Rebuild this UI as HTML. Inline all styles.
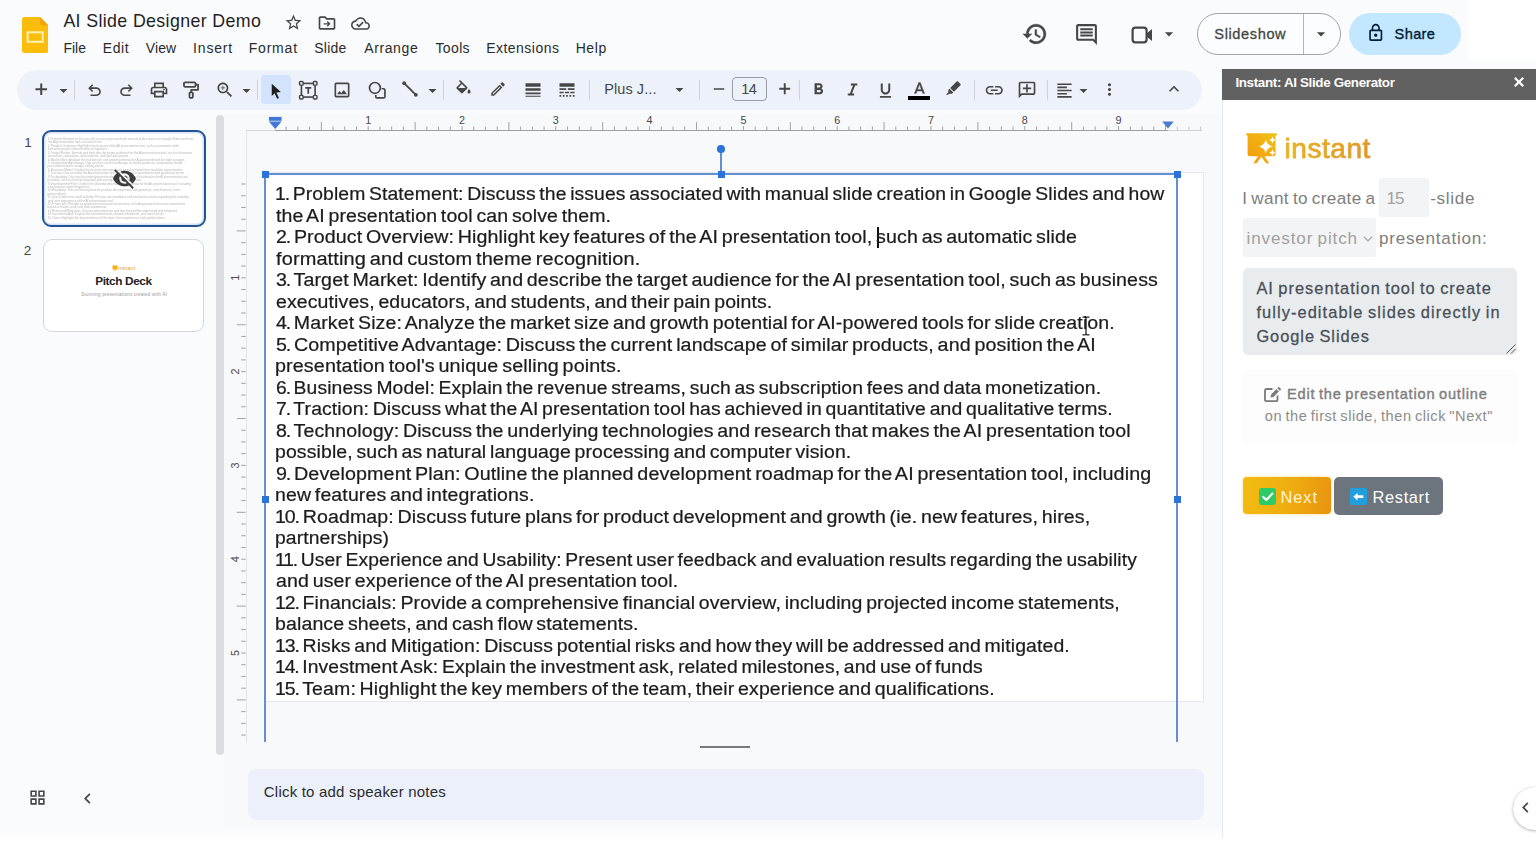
<!DOCTYPE html>
<html lang="en"><head><meta charset="utf-8"><title>AI Slide Designer Demo - Google Slides</title>
<style>
html,body{margin:0;padding:0}
body{width:1536px;height:864px;overflow:hidden;background:#f9fbfd;font-family:"Liberation Sans",sans-serif;position:relative}
.abs{position:absolute}
.t{position:absolute;white-space:pre;line-height:1;font-family:"Liberation Sans",sans-serif}
.sl{transform-origin:0 50%;-webkit-text-stroke:.22px #1c1c1c}
.th{color:#444;-webkit-text-stroke:0}
.ic{position:absolute;fill:#444746}
.sep{position:absolute;width:1px;height:20px;top:80px;background:#cfd2d7}
</style></head><body>
<!-- base areas -->
<div class="abs" style="left:1468px;top:0;width:68px;height:57px;background:#fff"></div>
<div class="abs" style="left:1468px;top:57px;width:68px;height:6px;background:linear-gradient(#fff,#f9fafb)"></div>

<!-- ===== logo ===== -->
<svg class="abs" style="left:21.5px;top:16.7px" width="26.5" height="36" viewBox="0 0 53 72">
 <path d="M5 0h31l17 17v50a5 5 0 0 1-5 5H5a5 5 0 0 1-5-5V5a5 5 0 0 1 5-5z" fill="#fabd0c"/>
 <path d="M36 0l17 17H41a5 5 0 0 1-5-5z" fill="#f0a508"/>
 <rect x="11.200" y="30.600" width="30.200" height="19" fill="none" stroke="#fdf2b0" stroke-width="4"/>
</svg>
<!-- title icons -->
<svg class="ic" style="left:283.5px;top:13.4px" width="19" height="19" viewBox="0 0 24 24"><path d="M22 9.24l-7.19-.62L12 2 9.19 8.63 2 9.24l5.46 4.73L5.82 21 12 17.27 18.18 21l-1.63-7.03L22 9.24zM12 15.4l-3.76 2.27 1-4.28-3.32-2.88 4.38-.38L12 6.1l1.71 4.04 4.38.38-3.32 2.88 1 4.28L12 15.4z"/></svg>
<svg class="ic" style="left:316.7px;top:13.4px" width="20" height="20" viewBox="0 0 24 24"><path d="M20 6h-8l-2-2H4c-1.1 0-2 .9-2 2v12c0 1.1.9 2 2 2h16c1.1 0 2-.9 2-2V8c0-1.1-.9-2-2-2zm0 12H4V6h5.17l2 2H20v10z"/><path d="M8 12.2h5.2l-1.5-1.5 1.1-1.1 3.4 3.4-3.4 3.4-1.1-1.1 1.5-1.5H8z"/></svg>
<svg class="ic" style="left:351px;top:13.9px" width="19" height="19" viewBox="0 0 24 24"><path d="M19.35 10.04C18.67 6.59 15.64 4 12 4 9.11 4 6.6 5.64 5.35 8.04 2.34 8.36 0 10.91 0 14c0 3.31 2.69 6 6 6h13c2.76 0 5-2.24 5-5 0-2.64-2.05-4.78-4.65-4.96zM19 18H6c-2.21 0-4-1.79-4-4 0-2.05 1.53-3.76 3.56-3.97l1.07-.11.5-.95C8.08 7.14 9.94 6 12 6c2.62 0 4.88 1.86 5.39 4.43l.3 1.5 1.53.11c1.56.1 2.78 1.41 2.78 2.96 0 1.65-1.35 3-3 3zm-9-3.82l-2.09-2.09L6.5 13.5 10 17l6.01-6.01-1.41-1.41z"/></svg>

<!-- header right -->
<svg class="ic" style="left:1021.8px;top:21px;stroke:#444746;stroke-width:.5px" width="26" height="26" viewBox="0 0 24 24"><path d="M13 3c-4.97 0-9 4.03-9 9H1l3.89 3.89.07.14L9 12H6c0-3.87 3.13-7 7-7s7 3.13 7 7-3.13 7-7 7c-1.93 0-3.68-.79-4.94-2.06l-1.42 1.42C8.27 19.99 10.51 21 13 21c4.97 0 9-4.03 9-9s-4.03-9-9-9zm-1 5v5l4.28 2.54.72-1.21-3.5-2.08V8H12z"/></svg>
<svg class="ic" style="left:1073.7px;top:22.3px" width="25" height="25" viewBox="0 0 24 24"><path d="M21.99 4c0-1.1-.89-2-1.99-2H4c-1.1 0-2 .9-2 2v12c0 1.1.9 2 2 2h14l4 4-.01-18zM20 4v13.17L18.83 16H4V4h16zM6 12h12v2H6zm0-3h12v2H6zm0-3h12v2H6z"/></svg>
<svg class="ic" style="left:1130.3px;top:23.2px" width="24" height="24" viewBox="0 0 24 24"><rect x="2.600" y="4.600" width="14" height="14.800" rx="2.800" fill="none" stroke="#444746" stroke-width="2.200"/><path d="M16 11l6-5v12l-6-5z"/></svg>
<svg class="ic" style="left:1159px;top:24.4px" width="20" height="20" viewBox="0 0 24 24"><path d="M7 10l5 5 5-5z"/></svg>
<div class="abs" style="left:1196.5px;top:13.3px;width:144px;height:42px;border:1px solid #a2a5a7;border-radius:22px;box-sizing:border-box;background:#fcfdfe"></div>
<div class="abs" style="left:1302.5px;top:13.8px;width:1px;height:40.4px;background:#b4b7b9"></div>
<svg class="ic" style="left:1311px;top:24px" width="20" height="20" viewBox="0 0 24 24"><path d="M7 10l5 5 5-5z"/></svg>
<div class="abs" style="left:1348.9px;top:13.4px;width:112px;height:41.4px;border-radius:21px;background:#c2e7ff"></div>
<svg class="abs" style="left:1366.3px;top:22.7px;fill:#001d35" width="19.5" height="19.5" viewBox="0 0 24 24"><path d="M18 8h-1V6c0-2.76-2.240-5-5-5S7 3.240 7 6v2H6c-1.100 0-2 .9-2 2v10c0 1.100.9 2 2 2h12c1.100 0 2-.9 2-2V10c0-1.100-.9-2-2-2zM9 6c0-1.660 1.340-3 3-3s3 1.340 3 3v2H9V6zm9 14H6V10h12v10zm-6-3c1.100 0 2-.9 2-2s-.9-2-2-2-2 .9-2 2 .9 2 2 2z"/></svg>

<!-- ===== toolbar ===== -->
<div class="abs" style="left:16.8px;top:70px;width:1185.2px;height:40px;border-radius:20px;background:#edf2fa"></div>
<div class="abs" style="left:260.6px;top:74.7px;width:30px;height:29.3px;border-radius:4px;background:#d3e3fd"></div>
<div class="sep" style="left:74px"></div><div class="sep" style="left:256.5px"></div><div class="sep" style="left:443px"></div>
<div class="sep" style="left:588.5px"></div><div class="sep" style="left:699px"></div><div class="sep" style="left:799px"></div>
<div class="sep" style="left:974px"></div><div class="sep" style="left:1047px"></div>
<svg class="ic" style="left:31.95px;top:79.95px" width="18.5" height="18.5" viewBox="0 0 24 24"><path d="M10.700 4.500h2.600v6.200h6.200v2.600h-6.200v6.200h-2.600v-6.200H4.500v-2.600h6.200z"/></svg>
<svg class="ic" style="left:54.20px;top:80.50px" width="19" height="19" viewBox="0 0 24 24"><path d="M7 10l5 5 5-5z"/></svg>
<svg class="ic" style="left:84.50px;top:81.00px" width="19" height="19" viewBox="0 0 24 24"><path d="M7 19v-2h7.1q1.575 0 2.738-1T18 13.5q0-1.5-1.163-2.5T14.1 10H7.8l2.6 2.6L9 14 4 9l5-5 1.400 1.400L7.800 8h6.300q2.425 0 4.163 1.575T20 13.500q0 2.350-1.738 3.925T14.100 19H7Z"/></svg>
<svg class="ic" style="left:117.00px;top:81.00px" width="19" height="19" viewBox="0 0 24 24"><g transform="translate(24 0) scale(-1 1)"><path d="M7 19v-2h7.1q1.575 0 2.738-1T18 13.5q0-1.5-1.163-2.5T14.1 10H7.8l2.6 2.6L9 14 4 9l5-5 1.400 1.400L7.800 8h6.300q2.425 0 4.163 1.575T20 13.500q0 2.350-1.738 3.925T14.100 19H7Z"/></g></svg>
<svg class="ic" style="left:149.40px;top:79.80px" width="20" height="20" viewBox="0 0 24 24"><path d="M19 8h-1V3H6v5H5c-1.66 0-3 1.340-3 3v6h4v4h12v-4h4v-6c0-1.660-1.340-3-3-3zM8 5h8v3H8V5zm8 12v2H8v-4h8v2zm2-2v-2H6v2H4v-4c0-.55.45-1 1-1h14c.55 0 1 .45 1 1v4h-2z"/><circle cx="18" cy="11.5" r="1"/></svg>
<svg class="ic" style="left:181.20px;top:80.00px" width="20" height="20" viewBox="0 0 24 24"><g fill="none" stroke="#444746" stroke-width="2.100" stroke-linejoin="round"><rect x="3.500" y="2.800" width="14" height="5.400" rx="1.600"/><path d="M17.500 5.500h3v6.200h-8.300v3"/><rect x="10.200" y="14.700" width="4" height="6.600" rx="1"/></g></svg>
<svg class="ic" style="left:214.50px;top:80.20px" width="20" height="20" viewBox="0 0 24 24"><path d="M15.5 14h-.79l-.28-.27C15.410 12.590 16 11.110 16 9.500 16 5.910 13.090 3 9.500 3S3 5.910 3 9.500 5.910 16 9.500 16c1.610 0 3.090-.59 4.230-1.570l.27.28v.79l5 4.990L20.490 19l-4.990-5zm-6 0C7.010 14 5 11.990 5 9.500S7.010 5 9.500 5 14 7.010 14 9.500 11.990 14 9.500 14zm.5-7H9v2H7v1h2v2h1v-2h2V9h-2z"/></svg>
<svg class="ic" style="left:236.50px;top:80.50px" width="19" height="19" viewBox="0 0 24 24"><path d="M7 10l5 5 5-5z"/></svg>
<svg class="ic" style="left:266.65px;top:81.55px" width="17.5" height="17.5" viewBox="0 0 24 24"><path d="M6.5 2.500l12.500 11.300-6.100.45 3.500 7.600-2.500 1.150-3.450-7.700L6.500 19.300z" fill="#1f1f1f"/></svg>
<svg class="ic" style="left:298.35px;top:79.55px" width="20.5" height="20.5" viewBox="0 0 24 24"><g fill="none" stroke="#444746" stroke-width="1.900"><rect x="4" y="4" width="16" height="16"/></g><g fill="#edf2fa" stroke="#444746" stroke-width="1.700"><rect x="1.800" y="1.800" width="4.200" height="4.200" rx="1"/><rect x="18" y="1.800" width="4.200" height="4.200" rx="1"/><rect x="1.800" y="18" width="4.200" height="4.200" rx="1"/><rect x="18" y="18" width="4.200" height="4.200" rx="1"/></g><path d="M8.500 8.300h7v1.900h-2.500v5.800h-2v-5.800H8.500z"/></svg>
<svg class="ic" style="left:331.80px;top:79.80px" width="20" height="20" viewBox="0 0 24 24"><path d="M19 5v14H5V5h14m0-2H5c-1.100 0-2 .9-2 2v14c0 1.100.9 2 2 2h14c1.100 0 2-.9 2-2V5c0-1.100-.9-2-2-2zm-4.860 8.860l-3 3.870L9 13.140 6 17h12l-3.860-5.140z"/></svg>
<svg class="ic" style="left:366.70px;top:80.00px" width="20" height="20" viewBox="0 0 24 24"><g fill="none" stroke="#444746" stroke-width="2"><circle cx="9.500" cy="9.500" r="6.500"/><path d="M17.500 10.500h2.500a1.500 1.500 0 0 1 1.500 1.500v8a1.500 1.500 0 0 1-1.500 1.500h-8a1.500 1.500 0 0 1-1.500-1.500v-2"/></g></svg>
<svg class="ic" style="left:399.70px;top:79.20px" width="20" height="20" viewBox="0 0 24 24"><g stroke="#444746" stroke-width="2.300" fill="none"><path d="M5.500 5.500l13 13"/></g><circle cx="5" cy="5" r="2.300"/><circle cx="19" cy="19" r="2.300"/></svg>
<svg class="ic" style="left:422.80px;top:80.50px" width="19" height="19" viewBox="0 0 24 24"><path d="M7 10l5 5 5-5z"/></svg>
<svg class="ic" style="left:453.90px;top:80.10px" width="19" height="19" viewBox="0 0 24 24"><path d="M16.560 8.940L7.620 0 6.210 1.410l2.380 2.380-5.150 5.150c-.59.59-.59 1.540 0 2.120l5.500 5.500c.29.29.68.44 1.060.44s.77-.15 1.060-.44l5.500-5.500c.59-.58.59-1.530 0-2.120zM5.210 10L10 5.210 14.790 10H5.210zM19 11.500s-2 2.170-2 3.500c0 1.100.9 2 2 2s2-.9 2-2c0-1.330-2-3.500-2-3.500z"/></svg>
<svg class="ic" style="left:488.60px;top:79.60px" width="18" height="18" viewBox="0 0 24 24"><path d="M14.060 9.020l.92.92L5.920 19H5v-.92l9.060-9.060M17.660 3c-.25 0-.51.1-.7.290l-1.830 1.830 3.750 3.750 1.830-1.830c.39-.39.39-1.020 0-1.410l-2.340-2.340c-.2-.2-.45-.29-.71-.29zm-3.600 3.190L3 17.250V21h3.750L17.810 9.940l-3.750-3.750z"/></svg>
<svg class="ic" style="left:522.70px;top:79.70px" width="20" height="20" viewBox="0 0 24 24"><path d="M3 17h18v-2H3v2zm0 3h18v-1H3v1zm0-7h18v-3H3v3zm0-9v4h18V4H3z"/></svg>
<svg class="ic" style="left:557.00px;top:79.70px" width="20" height="20" viewBox="0 0 24 24"><path d="M3 16h5v-2H3v2zm6.500 0h5v-2h-5v2zm6.500 0h5v-2h-5v2zM3 20h2v-2H3v2zm4 0h2v-2H7v2zm4 0h2v-2h-2v2zm4 0h2v-2h-2v2zm4 0h2v-2h-2v2zM3 12h8v-2H3v2zm10 0h8v-2h-8v2zM3 4v4h18V4H3z"/></svg>
<svg class="ic" style="left:669.90px;top:79.70px" width="19" height="19" viewBox="0 0 24 24"><path d="M7 10l5 5 5-5z"/></svg>
<svg class="ic" style="left:710.00px;top:80.20px" width="18" height="18" viewBox="0 0 24 24"><path d="M19 13H5v-2h14v2z"/></svg>
<svg class="ic" style="left:775.65px;top:80.45px" width="17.5" height="17.5" viewBox="0 0 24 24"><path d="M10.700 4.500h2.600v6.200h6.200v2.600h-6.200v6.200h-2.600v-6.200H4.500v-2.600h6.200z"/></svg>
<svg class="ic" style="left:809.30px;top:80.30px" width="19" height="19" viewBox="0 0 24 24"><path d="M15.600 10.790c.97-.67 1.650-1.770 1.650-2.790 0-2.260-1.750-4-4-4H7v14h7.040c2.090 0 3.710-1.700 3.710-3.790 0-1.520-.86-2.820-2.150-3.420zM10 6.500h3c.83 0 1.500.67 1.500 1.500s-.67 1.500-1.500 1.500h-3v-3zm3.500 9H10v-3h3.500c.83 0 1.500.67 1.500 1.500s-.67 1.500-1.500 1.500z"/></svg>
<svg class="ic" style="left:842.90px;top:80.10px" width="19" height="19" viewBox="0 0 24 24"><path d="M10 4.500v2.300h2.600l-3.900 10.400H6v2.300h8v-2.300h-2.600l3.900-10.400H18V4.500z"/></svg>
<svg class="ic" style="left:875.50px;top:81.00px" width="19" height="19" viewBox="0 0 24 24"><path d="M12 17c3.310 0 6-2.690 6-6V3h-2.500v8c0 1.930-1.570 3.500-3.500 3.500S8.500 12.930 8.500 11V3H6v8c0 3.310 2.690 6 6 6zm-7 2v2h14v-2H5z"/></svg>
<svg class="ic" style="left:909.50px;top:79.50px" width="19" height="19" viewBox="0 0 24 24"><path stroke="#444746" stroke-width=".5" d="M11 3L5.500 17h2.250l1.120-3h6.250l1.120 3h2.250L13 3h-2zm-1.380 9L12 5.670 14.380 12H9.620z"/></svg>
<svg class="ic" style="left:943.90px;top:79.00px" width="19" height="19" viewBox="0 0 24 24"><path d="M17.750 3.200l3.050 3.050c.5.500.5 1.300 0 1.800L12.600 16.250l-4.850-4.850L15.950 3.200c.5-.5 1.300-.5 1.800 0zM6.900 12.300l4.800 4.800-1.600 1.600H6.500l-1.300 1.300H2.500l3-3.300v-3z"/></svg>
<svg class="ic" style="left:983.75px;top:79.75px" width="20.5" height="20.5" viewBox="0 0 24 24"><path d="M3.900 12c0-1.710 1.390-3.100 3.100-3.100h4V7H7c-2.760 0-5 2.240-5 5s2.240 5 5 5h4v-1.900H7c-1.710 0-3.100-1.390-3.100-3.100zM8 13h8v-2H8v2zm9-6h-4v1.900h4c1.710 0 3.100 1.390 3.100 3.100s-1.390 3.100-3.100 3.100h-4V17h4c2.760 0 5-2.240 5-5s-2.240-5-5-5z"/></svg>
<svg class="ic" style="left:1016.80px;top:80.00px" width="20" height="20" viewBox="0 0 24 24"><g transform="translate(24 0) scale(-1 1)"><path d="M22 4c0-1.100-.9-2-2-2H4c-1.100 0-2 .9-2 2v12c0 1.100.9 2 2 2h14l4 4V4zm-2 13.170L18.830 16H4V4h16v13.170zM13 5h-2v4H7v2h4v4h2v-4h4V9h-4z"/></g></svg>
<svg class="ic" style="left:1055.30px;top:80.50px" width="19" height="19" viewBox="0 0 24 24"><path d="M15 15H3v2h12v-2zm0-8H3v2h12V7zM3 13h18v-2H3v2zm0 8h18v-2H3v2zM3 3v2h18V3H3z"/></svg>
<svg class="ic" style="left:1073.80px;top:80.80px" width="19" height="19" viewBox="0 0 24 24"><path d="M7 10l5 5 5-5z"/></svg>
<svg class="ic" style="left:1100.20px;top:80.00px" width="19" height="19" viewBox="0 0 24 24"><path d="M12 8c1.100 0 2-.9 2-2s-.9-2-2-2-2 .9-2 2 .9 2 2 2zm0 2c-1.100 0-2 .9-2 2s.9 2 2 2 2-.9 2-2-.9-2-2-2zm0 6c-1.100 0-2 .9-2 2s.9 2 2 2 2-.9 2-2-.9-2-2-2z"/></svg>
<svg class="ic" style="left:1164.40px;top:79.20px" width="20" height="20" viewBox="0 0 24 24"><path d="M12 8l-6 6 1.410 1.410L12 10.830l4.590 4.580L18 14z"/></svg>
<div class="abs" style="left:732.1px;top:77.2px;width:34.5px;height:23.8px;border:1px solid #9a9ea3;border-radius:4px;box-sizing:border-box"></div>
<div class="abs" style="left:907.7px;top:95.7px;width:22.6px;height:4px;background:#000"></div>

<!-- ===== filmstrip ===== -->
<div class="abs" style="left:42px;top:129.8px;width:164px;height:97px;border:2.6px solid #24538f;border-radius:9px;box-sizing:border-box;background:#fff;box-shadow:inset 0 0 0 1.6px #d6e4fb;overflow:hidden">
 <div class="abs" style="left:-0.55px;top:-3px;width:956px;height:570px;transform:scale(0.1638,0.1592);transform-origin:0 0;opacity:.42"><div class="t sl th" style="left:27.53px;top:54.31px;font-size:18px;letter-spacing:0.100px;word-spacing:-1.7px;transform:scaleX(1.0740)"><span style="letter-spacing:-1.00px">1.</span> Problem Statement: Discuss the issues associated with manual slide creation in Google Slides and how</div>
<div class="t sl th" style="left:28.60px;top:75.81px;font-size:18px;letter-spacing:0.100px;word-spacing:-1.7px;transform:scaleX(1.0845)">the AI presentation tool can solve them.</div>
<div class="t sl th" style="left:28.60px;top:97.31px;font-size:18px;letter-spacing:0.100px;word-spacing:-1.7px;transform:scaleX(1.0897)"><span style="letter-spacing:-1.00px">2.</span> Product Overview: Highlight key features of the AI presentation tool, such as automatic slide</div>
<div class="t sl th" style="left:28.60px;top:118.81px;font-size:18px;letter-spacing:0.100px;word-spacing:-1.7px;transform:scaleX(1.1098)">formatting and custom theme recognition.</div>
<div class="t sl th" style="left:28.60px;top:140.31px;font-size:18px;letter-spacing:0.100px;word-spacing:-1.7px;transform:scaleX(1.0897)"><span style="letter-spacing:-1.00px">3.</span> Target Market: Identify and describe the target audience for the AI presentation tool, such as business</div>
<div class="t sl th" style="left:28.60px;top:161.81px;font-size:18px;letter-spacing:0.100px;word-spacing:-1.7px;transform:scaleX(1.0831)">executives, educators, and students, and their pain points.</div>
<div class="t sl th" style="left:28.60px;top:183.31px;font-size:18px;letter-spacing:0.100px;word-spacing:-1.7px;transform:scaleX(1.0869)"><span style="letter-spacing:-1.00px">4.</span> Market Size: Analyze the market size and growth potential for AI-powered tools for slide creation.</div>
<div class="t sl th" style="left:28.60px;top:204.81px;font-size:18px;letter-spacing:0.100px;word-spacing:-1.7px;transform:scaleX(1.0921)"><span style="letter-spacing:-1.00px">5.</span> Competitive Advantage: Discuss the current landscape of similar products, and position the AI</div>
<div class="t sl th" style="left:27.50px;top:226.31px;font-size:18px;letter-spacing:0.100px;word-spacing:-1.7px;transform:scaleX(1.0964)">presentation tool&#x27;s unique selling points.</div>
<div class="t sl th" style="left:28.60px;top:247.81px;font-size:18px;letter-spacing:0.100px;word-spacing:-1.7px;transform:scaleX(1.0720)"><span style="letter-spacing:-1.00px">6.</span> Business Model: Explain the revenue streams, such as subscription fees and data monetization.</div>
<div class="t sl th" style="left:28.60px;top:269.31px;font-size:18px;letter-spacing:0.100px;word-spacing:-1.7px;transform:scaleX(1.0773)"><span style="letter-spacing:-1.00px">7.</span> Traction: Discuss what the AI presentation tool has achieved in quantitative and qualitative terms.</div>
<div class="t sl th" style="left:28.60px;top:290.81px;font-size:18px;letter-spacing:0.100px;word-spacing:-1.7px;transform:scaleX(1.0878)"><span style="letter-spacing:-1.00px">8.</span> Technology: Discuss the underlying technologies and research that makes the AI presentation tool</div>
<div class="t sl th" style="left:27.52px;top:312.31px;font-size:18px;letter-spacing:0.100px;word-spacing:-1.7px;transform:scaleX(1.0807)">possible, such as natural language processing and computer vision.</div>
<div class="t sl th" style="left:28.60px;top:333.81px;font-size:18px;letter-spacing:0.100px;word-spacing:-1.7px;transform:scaleX(1.0952)"><span style="letter-spacing:-1.00px">9.</span> Development Plan: Outline the planned development roadmap for the AI presentation tool, including</div>
<div class="t sl th" style="left:27.51px;top:355.31px;font-size:18px;letter-spacing:0.100px;word-spacing:-1.7px;transform:scaleX(1.0854)">new features and integrations.</div>
<div class="t sl th" style="left:27.51px;top:376.81px;font-size:18px;letter-spacing:0.100px;word-spacing:-1.7px;transform:scaleX(1.0879)"><span style="letter-spacing:-1.00px">10.</span> Roadmap: Discuss future plans for product development and growth (ie. new features, hires,</div>
<div class="t sl th" style="left:27.53px;top:398.31px;font-size:18px;letter-spacing:0.100px;word-spacing:-1.7px;transform:scaleX(1.0734)">partnerships)</div>
<div class="t sl th" style="left:27.53px;top:419.81px;font-size:18px;letter-spacing:0.100px;word-spacing:-1.7px;transform:scaleX(1.0693)"><span style="letter-spacing:-1.00px">11.</span> User Experience and Usability: Present user feedback and evaluation results regarding the usability</div>
<div class="t sl th" style="left:28.60px;top:441.31px;font-size:18px;letter-spacing:0.100px;word-spacing:-1.7px;transform:scaleX(1.0869)">and user experience of the AI presentation tool.</div>
<div class="t sl th" style="left:27.52px;top:462.81px;font-size:18px;letter-spacing:0.100px;word-spacing:-1.7px;transform:scaleX(1.0819)"><span style="letter-spacing:-1.00px">12.</span> Financials: Provide a comprehensive financial overview, including projected income statements,</div>
<div class="t sl th" style="left:27.51px;top:484.31px;font-size:18px;letter-spacing:0.100px;word-spacing:-1.7px;transform:scaleX(1.0860)">balance sheets, and cash flow statements.</div>
<div class="t sl th" style="left:27.52px;top:505.81px;font-size:18px;letter-spacing:0.100px;word-spacing:-1.7px;transform:scaleX(1.0803)"><span style="letter-spacing:-1.00px">13.</span> Risks and Mitigation: Discuss potential risks and how they will be addressed and mitigated.</div>
<div class="t sl th" style="left:27.53px;top:527.31px;font-size:18px;letter-spacing:0.100px;word-spacing:-1.7px;transform:scaleX(1.0723)"><span style="letter-spacing:-1.00px">14.</span> Investment Ask: Explain the investment ask, related milestones, and use of funds</div>
<div class="t sl th" style="left:27.52px;top:548.81px;font-size:18px;letter-spacing:0.100px;word-spacing:-1.7px;transform:scaleX(1.0842)"><span style="letter-spacing:-1.00px">15.</span> Team: Highlight the key members of the team, their experience and qualifications.</div></div>
</div>
<svg class="abs" style="left:111.5px;top:166.2px;fill:#3c3c3c" width="25" height="25" viewBox="0 0 24 24"><path d="M12 7c2.760 0 5 2.240 5 5 0 .65-.13 1.260-.36 1.830l2.920 2.920c1.510-1.260 2.700-2.890 3.430-4.750-1.730-4.390-6-7.500-11-7.500-1.400 0-2.740.25-3.980.7l2.160 2.160C10.740 7.130 11.350 7 12 7zM2 4.270l2.280 2.280.46.46C3.080 8.300 1.780 10.020 1 12c1.730 4.390 6 7.500 11 7.500 1.550 0 3.030-.3 4.380-.84l.42.42L19.730 22 21 20.730 3.270 3 2 4.270zM7.530 9.800l1.550 1.550c-.05.21-.08.43-.08.65 0 1.660 1.340 3 3 3 .22 0 .44-.03.65-.08l1.550 1.550c-.67.33-1.410.53-2.200.53-2.760 0-5-2.240-5-5 0-.79.2-1.530.53-2.200zm4.310-.78l3.150 3.150.02-.16c0-1.660-1.340-3-3-3l-.17.010z"/></svg>
<div class="abs" style="left:43.3px;top:238.6px;width:161.2px;height:93.7px;border:1px solid #d4d6da;border-radius:9px;box-sizing:border-box;background:#fff"></div>
<svg class="abs" style="left:111.6px;top:265px" width="6" height="6" viewBox="0 0 24 24"><path d="M1 2h22v3h-1v13H14l4 5h-3l-3-4-3 4H6l4-5H2V5H1z" fill="#f2b01e"/></svg>
<!-- scrollbar -->
<div class="abs" style="left:216.4px;top:115px;width:7.4px;height:640px;border-radius:4px;background:#dadce0"></div>
<!-- bottom icons -->
<svg class="ic" style="left:27.5px;top:788.2px" width="19" height="19" viewBox="0 0 24 24"><path d="M3 3v8h8V3H3zm6 6H5V5h4v4zm-6 4v8h8v-8H3zm6 6H5v-4h4v4zm4-16v8h8V3h-8zm6 6h-4V5h4v4zm-6 4v8h8v-8h-8zm6 6h-4v-4h4v4z"/></svg>
<svg class="ic" style="left:77px;top:787.8px" width="21" height="21" viewBox="0 0 24 24"><path d="M15.410 7.410L14 6l-6 6 6 6 1.410-1.410L10.830 12z"/></svg>

<!-- ===== canvas ===== -->
<div class="abs" style="left:224px;top:113px;width:997.5px;height:715px;background:#f8f9fa"></div>
<div class="abs" style="left:246px;top:130.500px;width:1px;height:612px;background:#e4e6e9"></div>
<div class="abs" style="left:264px;top:172px;width:940px;height:530px;background:#fff;border:1px solid #e6e8eb;box-sizing:border-box"></div>
<!-- text box -->
<div class="abs" style="left:263.8px;top:172.8px;width:914.7px;height:569.3px;border:2.8px solid #6390d0;border-bottom:none;box-sizing:border-box"></div>
<div class="abs" style="left:720.4px;top:150px;width:1.8px;height:24px;background:#6390d0"></div>
<div class="abs" style="left:717.2px;top:145.2px;width:7.6px;height:7.6px;border-radius:50%;background:#2c73d9"></div>
<div class="abs hd" style="left:262.3px;top:170.8px"></div><div class="abs hd" style="left:717.6px;top:170.8px"></div><div class="abs hd" style="left:1173.8px;top:170.8px"></div>
<div class="abs hd" style="left:262.3px;top:495.6px"></div><div class="abs hd" style="left:1173.8px;top:495.6px"></div>
<style>.hd{width:7px;height:7px;background:#2c73d9}</style>
<!-- text caret + mouse I-beam -->
<div class="abs" style="left:876.6px;top:227px;width:2px;height:20.5px;background:#111"></div>
<svg class="abs" style="left:1081px;top:316px" width="10" height="20" viewBox="0 0 10 20"><path d="M1.500 1.200h2.300q1.200 0 1.200 1.200v15.200q0 1.200-1.200 1.200H1.500M8.500 1.200H6.200Q5 1.200 5 2.400M8.500 18.800H6.200Q5 18.800 5 17.600" fill="none" stroke="#222" stroke-width="1.300"/></svg>
<div class="t sl" style="left:274.53px;top:185.31px;font-size:18px;color:#1c1c1c;letter-spacing:0.100px;transform:scaleX(1.0740);word-spacing:-1.7px;"><span style="letter-spacing:-1.00px">1.</span> Problem Statement: Discuss the issues associated with manual slide creation in Google Slides and how</div>
<div class="t sl" style="left:275.60px;top:206.81px;font-size:18px;color:#1c1c1c;letter-spacing:0.100px;transform:scaleX(1.0845);word-spacing:-1.7px;">the AI presentation tool can solve them.</div>
<div class="t sl" style="left:275.60px;top:228.31px;font-size:18px;color:#1c1c1c;letter-spacing:0.100px;transform:scaleX(1.0897);word-spacing:-1.7px;"><span style="letter-spacing:-1.00px">2.</span> Product Overview: Highlight key features of the AI presentation tool, such as automatic slide</div>
<div class="t sl" style="left:275.60px;top:249.81px;font-size:18px;color:#1c1c1c;letter-spacing:0.100px;transform:scaleX(1.1098);word-spacing:-1.7px;">formatting and custom theme recognition.</div>
<div class="t sl" style="left:275.60px;top:271.31px;font-size:18px;color:#1c1c1c;letter-spacing:0.100px;transform:scaleX(1.0897);word-spacing:-1.7px;"><span style="letter-spacing:-1.00px">3.</span> Target Market: Identify and describe the target audience for the AI presentation tool, such as business</div>
<div class="t sl" style="left:275.60px;top:292.81px;font-size:18px;color:#1c1c1c;letter-spacing:0.100px;transform:scaleX(1.0831);word-spacing:-1.7px;">executives, educators, and students, and their pain points.</div>
<div class="t sl" style="left:275.60px;top:314.31px;font-size:18px;color:#1c1c1c;letter-spacing:0.100px;transform:scaleX(1.0869);word-spacing:-1.7px;"><span style="letter-spacing:-1.00px">4.</span> Market Size: Analyze the market size and growth potential for AI-powered tools for slide creation.</div>
<div class="t sl" style="left:275.60px;top:335.81px;font-size:18px;color:#1c1c1c;letter-spacing:0.100px;transform:scaleX(1.0921);word-spacing:-1.7px;"><span style="letter-spacing:-1.00px">5.</span> Competitive Advantage: Discuss the current landscape of similar products, and position the AI</div>
<div class="t sl" style="left:274.50px;top:357.31px;font-size:18px;color:#1c1c1c;letter-spacing:0.100px;transform:scaleX(1.0964);word-spacing:-1.7px;">presentation tool&#x27;s unique selling points.</div>
<div class="t sl" style="left:275.60px;top:378.81px;font-size:18px;color:#1c1c1c;letter-spacing:0.100px;transform:scaleX(1.0720);word-spacing:-1.7px;"><span style="letter-spacing:-1.00px">6.</span> Business Model: Explain the revenue streams, such as subscription fees and data monetization.</div>
<div class="t sl" style="left:275.60px;top:400.31px;font-size:18px;color:#1c1c1c;letter-spacing:0.100px;transform:scaleX(1.0773);word-spacing:-1.7px;"><span style="letter-spacing:-1.00px">7.</span> Traction: Discuss what the AI presentation tool has achieved in quantitative and qualitative terms.</div>
<div class="t sl" style="left:275.60px;top:421.81px;font-size:18px;color:#1c1c1c;letter-spacing:0.100px;transform:scaleX(1.0878);word-spacing:-1.7px;"><span style="letter-spacing:-1.00px">8.</span> Technology: Discuss the underlying technologies and research that makes the AI presentation tool</div>
<div class="t sl" style="left:274.52px;top:443.31px;font-size:18px;color:#1c1c1c;letter-spacing:0.100px;transform:scaleX(1.0807);word-spacing:-1.7px;">possible, such as natural language processing and computer vision.</div>
<div class="t sl" style="left:275.60px;top:464.81px;font-size:18px;color:#1c1c1c;letter-spacing:0.100px;transform:scaleX(1.0952);word-spacing:-1.7px;"><span style="letter-spacing:-1.00px">9.</span> Development Plan: Outline the planned development roadmap for the AI presentation tool, including</div>
<div class="t sl" style="left:274.51px;top:486.31px;font-size:18px;color:#1c1c1c;letter-spacing:0.100px;transform:scaleX(1.0854);word-spacing:-1.7px;">new features and integrations.</div>
<div class="t sl" style="left:274.51px;top:507.81px;font-size:18px;color:#1c1c1c;letter-spacing:0.100px;transform:scaleX(1.0879);word-spacing:-1.7px;"><span style="letter-spacing:-1.00px">10.</span> Roadmap: Discuss future plans for product development and growth (ie. new features, hires,</div>
<div class="t sl" style="left:274.53px;top:529.31px;font-size:18px;color:#1c1c1c;letter-spacing:0.100px;transform:scaleX(1.0734);word-spacing:-1.7px;">partnerships)</div>
<div class="t sl" style="left:274.53px;top:550.81px;font-size:18px;color:#1c1c1c;letter-spacing:0.100px;transform:scaleX(1.0693);word-spacing:-1.7px;"><span style="letter-spacing:-1.00px">11.</span> User Experience and Usability: Present user feedback and evaluation results regarding the usability</div>
<div class="t sl" style="left:275.60px;top:572.31px;font-size:18px;color:#1c1c1c;letter-spacing:0.100px;transform:scaleX(1.0869);word-spacing:-1.7px;">and user experience of the AI presentation tool.</div>
<div class="t sl" style="left:274.52px;top:593.81px;font-size:18px;color:#1c1c1c;letter-spacing:0.100px;transform:scaleX(1.0819);word-spacing:-1.7px;"><span style="letter-spacing:-1.00px">12.</span> Financials: Provide a comprehensive financial overview, including projected income statements,</div>
<div class="t sl" style="left:274.51px;top:615.31px;font-size:18px;color:#1c1c1c;letter-spacing:0.100px;transform:scaleX(1.0860);word-spacing:-1.7px;">balance sheets, and cash flow statements.</div>
<div class="t sl" style="left:274.52px;top:636.81px;font-size:18px;color:#1c1c1c;letter-spacing:0.100px;transform:scaleX(1.0803);word-spacing:-1.7px;"><span style="letter-spacing:-1.00px">13.</span> Risks and Mitigation: Discuss potential risks and how they will be addressed and mitigated.</div>
<div class="t sl" style="left:274.53px;top:658.31px;font-size:18px;color:#1c1c1c;letter-spacing:0.100px;transform:scaleX(1.0723);word-spacing:-1.7px;"><span style="letter-spacing:-1.00px">14.</span> Investment Ask: Explain the investment ask, related milestones, and use of funds</div>
<div class="t sl" style="left:274.52px;top:679.81px;font-size:18px;color:#1c1c1c;letter-spacing:0.100px;transform:scaleX(1.0842);word-spacing:-1.7px;"><span style="letter-spacing:-1.00px">15.</span> Team: Highlight the key members of the team, their experience and qualifications.</div>
<!-- drag handle + notes -->
<div class="abs" style="left:700px;top:745.5px;width:50px;height:2px;background:#777a7e"></div>
<div class="abs" style="left:248.2px;top:769.4px;width:955.5px;height:50.4px;border-radius:8px;background:#ecf0fa"></div>

<svg class="abs" style="left:0;top:0" width="1536" height="864" viewBox="0 0 1536 864">
<rect x="246" y="130" width="29" height="1" fill="#d5d7da"/>
<rect x="275" y="130" width="893" height="1" fill="#9b9ea2"/>
<rect x="1168" y="130" width="34" height="1" fill="#d0d2d5"/>
<rect x="285.62" y="126.50" width="1" height="4" fill="#a0a3a7"/>
<rect x="297.35" y="126.50" width="1" height="4" fill="#a0a3a7"/>
<rect x="309.07" y="126.50" width="1" height="4" fill="#a0a3a7"/>
<rect x="320.80" y="122.00" width="1" height="8.5" fill="#a0a3a7"/>
<rect x="332.52" y="126.50" width="1" height="4" fill="#a0a3a7"/>
<rect x="344.25" y="126.50" width="1" height="4" fill="#a0a3a7"/>
<rect x="355.97" y="126.50" width="1" height="4" fill="#a0a3a7"/>
<rect x="367.70" y="126.00" width="1" height="4.5" fill="#a0a3a7"/>
<text x="368.20" y="123.8" font-family="Liberation Sans, sans-serif" font-size="10.8" fill="#45484c" text-anchor="middle">1</text>
<rect x="379.42" y="126.50" width="1" height="4" fill="#a0a3a7"/>
<rect x="391.15" y="126.50" width="1" height="4" fill="#a0a3a7"/>
<rect x="402.88" y="126.50" width="1" height="4" fill="#a0a3a7"/>
<rect x="414.60" y="122.00" width="1" height="8.5" fill="#a0a3a7"/>
<rect x="426.32" y="126.50" width="1" height="4" fill="#a0a3a7"/>
<rect x="438.05" y="126.50" width="1" height="4" fill="#a0a3a7"/>
<rect x="449.77" y="126.50" width="1" height="4" fill="#a0a3a7"/>
<rect x="461.50" y="126.00" width="1" height="4.5" fill="#a0a3a7"/>
<text x="462.00" y="123.8" font-family="Liberation Sans, sans-serif" font-size="10.8" fill="#45484c" text-anchor="middle">2</text>
<rect x="473.22" y="126.50" width="1" height="4" fill="#a0a3a7"/>
<rect x="484.95" y="126.50" width="1" height="4" fill="#a0a3a7"/>
<rect x="496.67" y="126.50" width="1" height="4" fill="#a0a3a7"/>
<rect x="508.40" y="122.00" width="1" height="8.5" fill="#a0a3a7"/>
<rect x="520.12" y="126.50" width="1" height="4" fill="#a0a3a7"/>
<rect x="531.85" y="126.50" width="1" height="4" fill="#a0a3a7"/>
<rect x="543.58" y="126.50" width="1" height="4" fill="#a0a3a7"/>
<rect x="555.30" y="126.00" width="1" height="4.5" fill="#a0a3a7"/>
<text x="555.80" y="123.8" font-family="Liberation Sans, sans-serif" font-size="10.8" fill="#45484c" text-anchor="middle">3</text>
<rect x="567.02" y="126.50" width="1" height="4" fill="#a0a3a7"/>
<rect x="578.75" y="126.50" width="1" height="4" fill="#a0a3a7"/>
<rect x="590.47" y="126.50" width="1" height="4" fill="#a0a3a7"/>
<rect x="602.20" y="122.00" width="1" height="8.5" fill="#a0a3a7"/>
<rect x="613.92" y="126.50" width="1" height="4" fill="#a0a3a7"/>
<rect x="625.65" y="126.50" width="1" height="4" fill="#a0a3a7"/>
<rect x="637.38" y="126.50" width="1" height="4" fill="#a0a3a7"/>
<rect x="649.10" y="126.00" width="1" height="4.5" fill="#a0a3a7"/>
<text x="649.60" y="123.8" font-family="Liberation Sans, sans-serif" font-size="10.8" fill="#45484c" text-anchor="middle">4</text>
<rect x="660.83" y="126.50" width="1" height="4" fill="#a0a3a7"/>
<rect x="672.55" y="126.50" width="1" height="4" fill="#a0a3a7"/>
<rect x="684.27" y="126.50" width="1" height="4" fill="#a0a3a7"/>
<rect x="696.00" y="122.00" width="1" height="8.5" fill="#a0a3a7"/>
<rect x="707.72" y="126.50" width="1" height="4" fill="#a0a3a7"/>
<rect x="719.45" y="126.50" width="1" height="4" fill="#a0a3a7"/>
<rect x="731.17" y="126.50" width="1" height="4" fill="#a0a3a7"/>
<rect x="742.90" y="126.00" width="1" height="4.5" fill="#a0a3a7"/>
<text x="743.40" y="123.8" font-family="Liberation Sans, sans-serif" font-size="10.8" fill="#45484c" text-anchor="middle">5</text>
<rect x="754.62" y="126.50" width="1" height="4" fill="#a0a3a7"/>
<rect x="766.35" y="126.50" width="1" height="4" fill="#a0a3a7"/>
<rect x="778.08" y="126.50" width="1" height="4" fill="#a0a3a7"/>
<rect x="789.80" y="122.00" width="1" height="8.5" fill="#a0a3a7"/>
<rect x="801.52" y="126.50" width="1" height="4" fill="#a0a3a7"/>
<rect x="813.25" y="126.50" width="1" height="4" fill="#a0a3a7"/>
<rect x="824.97" y="126.50" width="1" height="4" fill="#a0a3a7"/>
<rect x="836.70" y="126.00" width="1" height="4.5" fill="#a0a3a7"/>
<text x="837.20" y="123.8" font-family="Liberation Sans, sans-serif" font-size="10.8" fill="#45484c" text-anchor="middle">6</text>
<rect x="848.42" y="126.50" width="1" height="4" fill="#a0a3a7"/>
<rect x="860.15" y="126.50" width="1" height="4" fill="#a0a3a7"/>
<rect x="871.88" y="126.50" width="1" height="4" fill="#a0a3a7"/>
<rect x="883.60" y="122.00" width="1" height="8.5" fill="#a0a3a7"/>
<rect x="895.32" y="126.50" width="1" height="4" fill="#a0a3a7"/>
<rect x="907.05" y="126.50" width="1" height="4" fill="#a0a3a7"/>
<rect x="918.77" y="126.50" width="1" height="4" fill="#a0a3a7"/>
<rect x="930.50" y="126.00" width="1" height="4.5" fill="#a0a3a7"/>
<text x="931.00" y="123.8" font-family="Liberation Sans, sans-serif" font-size="10.8" fill="#45484c" text-anchor="middle">7</text>
<rect x="942.22" y="126.50" width="1" height="4" fill="#a0a3a7"/>
<rect x="953.95" y="126.50" width="1" height="4" fill="#a0a3a7"/>
<rect x="965.67" y="126.50" width="1" height="4" fill="#a0a3a7"/>
<rect x="977.40" y="122.00" width="1" height="8.5" fill="#a0a3a7"/>
<rect x="989.12" y="126.50" width="1" height="4" fill="#a0a3a7"/>
<rect x="1000.85" y="126.50" width="1" height="4" fill="#a0a3a7"/>
<rect x="1012.57" y="126.50" width="1" height="4" fill="#a0a3a7"/>
<rect x="1024.30" y="126.00" width="1" height="4.5" fill="#a0a3a7"/>
<text x="1024.80" y="123.8" font-family="Liberation Sans, sans-serif" font-size="10.8" fill="#45484c" text-anchor="middle">8</text>
<rect x="1036.03" y="126.50" width="1" height="4" fill="#a0a3a7"/>
<rect x="1047.75" y="126.50" width="1" height="4" fill="#a0a3a7"/>
<rect x="1059.47" y="126.50" width="1" height="4" fill="#a0a3a7"/>
<rect x="1071.20" y="122.00" width="1" height="8.5" fill="#a0a3a7"/>
<rect x="1082.92" y="126.50" width="1" height="4" fill="#a0a3a7"/>
<rect x="1094.65" y="126.50" width="1" height="4" fill="#a0a3a7"/>
<rect x="1106.38" y="126.50" width="1" height="4" fill="#a0a3a7"/>
<rect x="1118.10" y="126.00" width="1" height="4.5" fill="#a0a3a7"/>
<text x="1118.60" y="123.8" font-family="Liberation Sans, sans-serif" font-size="10.8" fill="#45484c" text-anchor="middle">9</text>
<rect x="1129.82" y="126.50" width="1" height="4" fill="#a0a3a7"/>
<rect x="1141.55" y="126.50" width="1" height="4" fill="#a0a3a7"/>
<rect x="1153.28" y="126.50" width="1" height="4" fill="#a0a3a7"/>
<rect x="1165.00" y="122.00" width="1" height="8.5" fill="#a0a3a7"/>
<rect x="1176.72" y="126.50" width="1" height="4" fill="#c4c6c9"/>
<rect x="1188.45" y="126.50" width="1" height="4" fill="#c4c6c9"/>
<rect x="1200.17" y="126.50" width="1" height="4" fill="#c4c6c9"/>
<rect x="241.20" y="183.50" width="4.5" height="1" fill="#a0a3a7"/>
<rect x="241.20" y="195.22" width="4.5" height="1" fill="#a0a3a7"/>
<rect x="241.20" y="206.95" width="4.5" height="1" fill="#a0a3a7"/>
<rect x="241.20" y="218.68" width="4.5" height="1" fill="#a0a3a7"/>
<rect x="236.70" y="230.40" width="9" height="1" fill="#a0a3a7"/>
<rect x="241.20" y="242.12" width="4.5" height="1" fill="#a0a3a7"/>
<rect x="241.20" y="253.85" width="4.5" height="1" fill="#a0a3a7"/>
<rect x="241.20" y="265.57" width="4.5" height="1" fill="#a0a3a7"/>
<rect x="241.20" y="277.30" width="4.5" height="1" fill="#a0a3a7"/>
<text transform="translate(239.3 277.80) rotate(-90)" font-family="Liberation Sans, sans-serif" font-size="10.8" fill="#45484c" text-anchor="middle">1</text>
<rect x="241.20" y="289.02" width="4.5" height="1" fill="#a0a3a7"/>
<rect x="241.20" y="300.75" width="4.5" height="1" fill="#a0a3a7"/>
<rect x="241.20" y="312.48" width="4.5" height="1" fill="#a0a3a7"/>
<rect x="236.70" y="324.20" width="9" height="1" fill="#a0a3a7"/>
<rect x="241.20" y="335.92" width="4.5" height="1" fill="#a0a3a7"/>
<rect x="241.20" y="347.65" width="4.5" height="1" fill="#a0a3a7"/>
<rect x="241.20" y="359.38" width="4.5" height="1" fill="#a0a3a7"/>
<rect x="241.20" y="371.10" width="4.5" height="1" fill="#a0a3a7"/>
<text transform="translate(239.3 371.60) rotate(-90)" font-family="Liberation Sans, sans-serif" font-size="10.8" fill="#45484c" text-anchor="middle">2</text>
<rect x="241.20" y="382.82" width="4.5" height="1" fill="#a0a3a7"/>
<rect x="241.20" y="394.55" width="4.5" height="1" fill="#a0a3a7"/>
<rect x="241.20" y="406.27" width="4.5" height="1" fill="#a0a3a7"/>
<rect x="236.70" y="418.00" width="9" height="1" fill="#a0a3a7"/>
<rect x="241.20" y="429.73" width="4.5" height="1" fill="#a0a3a7"/>
<rect x="241.20" y="441.45" width="4.5" height="1" fill="#a0a3a7"/>
<rect x="241.20" y="453.18" width="4.5" height="1" fill="#a0a3a7"/>
<rect x="241.20" y="464.90" width="4.5" height="1" fill="#a0a3a7"/>
<text transform="translate(239.3 465.40) rotate(-90)" font-family="Liberation Sans, sans-serif" font-size="10.8" fill="#45484c" text-anchor="middle">3</text>
<rect x="241.20" y="476.62" width="4.5" height="1" fill="#a0a3a7"/>
<rect x="241.20" y="488.35" width="4.5" height="1" fill="#a0a3a7"/>
<rect x="241.20" y="500.07" width="4.5" height="1" fill="#a0a3a7"/>
<rect x="236.70" y="511.80" width="9" height="1" fill="#a0a3a7"/>
<rect x="241.20" y="523.52" width="4.5" height="1" fill="#a0a3a7"/>
<rect x="241.20" y="535.25" width="4.5" height="1" fill="#a0a3a7"/>
<rect x="241.20" y="546.97" width="4.5" height="1" fill="#a0a3a7"/>
<rect x="241.20" y="558.70" width="4.5" height="1" fill="#a0a3a7"/>
<text transform="translate(239.3 559.20) rotate(-90)" font-family="Liberation Sans, sans-serif" font-size="10.8" fill="#45484c" text-anchor="middle">4</text>
<rect x="241.20" y="570.42" width="4.5" height="1" fill="#a0a3a7"/>
<rect x="241.20" y="582.15" width="4.5" height="1" fill="#a0a3a7"/>
<rect x="241.20" y="593.88" width="4.5" height="1" fill="#a0a3a7"/>
<rect x="236.70" y="605.60" width="9" height="1" fill="#a0a3a7"/>
<rect x="241.20" y="617.33" width="4.5" height="1" fill="#a0a3a7"/>
<rect x="241.20" y="629.05" width="4.5" height="1" fill="#a0a3a7"/>
<rect x="241.20" y="640.77" width="4.5" height="1" fill="#a0a3a7"/>
<rect x="241.20" y="652.50" width="4.5" height="1" fill="#a0a3a7"/>
<text transform="translate(239.3 653.00) rotate(-90)" font-family="Liberation Sans, sans-serif" font-size="10.8" fill="#45484c" text-anchor="middle">5</text>
<rect x="241.20" y="664.22" width="4.5" height="1" fill="#a0a3a7"/>
<rect x="241.20" y="675.95" width="4.5" height="1" fill="#a0a3a7"/>
<rect x="241.20" y="687.67" width="4.5" height="1" fill="#a0a3a7"/>
<rect x="236.70" y="699.40" width="9" height="1" fill="#a0a3a7"/>
<rect x="241.20" y="711.12" width="4.5" height="1" fill="#a0a3a7"/>
<rect x="241.20" y="722.85" width="4.5" height="1" fill="#a0a3a7"/>
<rect x="241.20" y="734.57" width="4.5" height="1" fill="#a0a3a7"/>
<rect x="268.9" y="116.9" width="12.7" height="3.9" fill="#3f78d8"/>
<path d="M268.9 121.4h12.7l-6.35 7.6z" fill="#3f78d8"/>
<path d="M1162.200 121.600h11.600l-5.800 6.900z" fill="#4a7bd0"/>
</svg>
<!-- ===== sidebar ===== -->
<div class="abs" style="left:1221.5px;top:68.7px;width:314.5px;height:796px;background:#fff;border-left:1px solid #e6e8eb;box-sizing:border-box"></div>
<div class="abs" style="left:1221.8px;top:68.6px;width:314.2px;height:31.6px;background:#616161"></div>
<svg class="abs" style="left:1510.6px;top:74.1px;fill:#fff" width="16" height="16" viewBox="0 0 24 24"><path d="M19.500 6.900L17.100 4.500 12 9.600 6.900 4.500 4.500 6.900 9.600 12 4.500 17.100 6.900 19.500 12 14.400 17.100 19.500 19.500 17.100 14.400 12z"/></svg>
<!-- logo -->
<svg class="abs" style="left:1246px;top:132.6px" width="31.2" height="31" viewBox="0 0 62.400 62">
 <defs><linearGradient id="lg" x1="0" y1="1" x2="1" y2="0"><stop offset="0" stop-color="#f59a0c"/><stop offset=".55" stop-color="#f3ae12"/><stop offset="1" stop-color="#ecc51a"/></linearGradient></defs>
 <path d="M0.600 0.400H61.800V5.200H59.200V42.400q0 4-4 4H37l9.500 14h-6.500L30.600 47.600 21.200 60.400h-6.500l9.500-14H7.200q-4 0-4-4V5.200H0.600z" fill="url(#lg)"/>
 <path d="M39.600 12.800q2.500 11.500 14 14q-11.500 2.500-14 14q-2.500-11.500-14-14q11.500-2.500 14-14z" fill="#fff"/>
 <path d="M53 7.300q1.100 5.400 6.500 6.500q-5.400 1.100-6.500 6.500q-1.100-5.400-6.500-6.500q5.400-1.100 6.500-6.500zM53 32.800q1.100 5.400 6.500 6.500q-5.400 1.100-6.500 6.500q-1.100-5.400-6.500-6.500q5.400-1.100 6.500-6.500z" fill="#fff"/>
</svg>
<div class="t" style="left:1284.6px;top:134.6px;font-size:28px;letter-spacing:.55px;background:linear-gradient(90deg,#eab61a,#e0952c);-webkit-background-clip:text;background-clip:text;color:transparent;-webkit-text-stroke:.5px rgba(228,164,34,.95)">instant</div>
<!-- inputs -->
<div class="abs" style="left:1379.4px;top:177.8px;width:49.4px;height:39.1px;background:#f3f4f5;border-radius:2px"></div>
<div class="abs" style="left:1243.3px;top:217.9px;width:132.8px;height:39px;background:#f3f4f5;border-radius:2px"></div>
<svg class="abs" style="left:1362.5px;top:235.6px" width="10" height="6" viewBox="0 0 10 6"><path d="M.8.800l4.200 4 4.200-4" fill="none" stroke="#a9a9a9" stroke-width="1.200"/></svg>
<div class="abs" style="left:1242.7px;top:268.3px;width:274px;height:86.3px;background:#e9ecef;border-radius:5px"></div>
<svg class="abs" style="left:1506px;top:344.4px" width="10" height="10" viewBox="0 0 10 10"><path d="M.5 9.500l9-9M5 9.500l4.500-4.500" fill="none" stroke="#555" stroke-width="1"/></svg>
<!-- alert -->
<div class="abs" style="left:1240.8px;top:368.9px;width:278.4px;height:75.7px;background:#fdfdfd;border-radius:5px"></div>
<svg class="abs" style="left:1263.8px;top:385.9px" width="18.500" height="16.500" viewBox="0 0 37 33"><g fill="none" stroke="#7a7a7a" stroke-width="3.600" stroke-linejoin="round"><path d="M27 19v8.500a3 3 0 0 1-3 3H5a3 3 0 0 1-3-3V9a3 3 0 0 1 3-3h12"/></g><path d="M29.500 1.500l5 5-2.800 2.800-5-5zM24.800 6.200l5 5L19 22l-6 1.200L14.200 17z" fill="#7a7a7a"/></svg>
<!-- buttons -->
<div class="abs" style="left:1242.8px;top:477.4px;width:88.1px;height:37px;border-radius:4px;background:linear-gradient(100deg,#f2bd12 0%,#efac10 55%,#e8930f 100%);box-shadow:0 0 3px rgba(245,200,70,.7)"></div>
<div class="abs" style="left:1258.5px;top:487.9px;width:17.6px;height:17.3px;border-radius:3px;background:#2fca68"></div>
<svg class="abs" style="left:1258.500px;top:487.900px" width="17.600" height="17.300" viewBox="0 0 18 18"><path d="M4.300 9.300l3.200 3.200 6.300-6.800" fill="none" stroke="#fff" stroke-width="2.100" stroke-linecap="round" stroke-linejoin="round"/></svg>
<div class="abs" style="left:1333.7px;top:476.7px;width:109.4px;height:38.3px;border-radius:5px;background:#6c757d"></div>
<div class="abs" style="left:1350px;top:487.9px;width:17.1px;height:17.3px;border-radius:2px;background:#219fdc"></div>
<svg class="abs" style="left:1350px;top:487.900px" width="17.100" height="17.300" viewBox="0 0 18 18"><path d="M14 7.600H8V5L3.500 9 8 13v-2.600h6z" fill="#fff"/></svg>
<!-- side toggle -->
<div class="abs" style="left:1512.500px;top:786.500px;width:43px;height:43px;border-radius:50%;background:#fff;box-shadow:0 1px 3px rgba(60,64,67,.35),0 0 1px rgba(60,64,67,.3)"></div>
<svg class="ic" style="left:1515px;top:797px" width="21" height="21" viewBox="0 0 24 24"><path d="M15.410 7.410L14 6l-6 6 6 6 1.410-1.410L10.830 12z"/></svg>

<div class="t" style="left:63.40px;top:13.43px;font-size:17.8px;color:#1f1f1f;letter-spacing:0.364px;">AI Slide Designer Demo</div>
<div class="t" style="left:63.40px;top:41.00px;font-size:14px;color:#2b2b2b;letter-spacing:0.026px;">File</div>
<div class="t" style="left:102.80px;top:41.00px;font-size:14px;color:#2b2b2b;letter-spacing:0.589px;">Edit</div>
<div class="t" style="left:145.80px;top:41.00px;font-size:14px;color:#2b2b2b;letter-spacing:0.106px;">View</div>
<div class="t" style="left:193.10px;top:41.00px;font-size:14px;color:#2b2b2b;letter-spacing:0.815px;">Insert</div>
<div class="t" style="left:248.70px;top:41.00px;font-size:14px;color:#2b2b2b;letter-spacing:0.810px;">Format</div>
<div class="t" style="left:314.20px;top:41.00px;font-size:14px;color:#2b2b2b;letter-spacing:0.264px;">Slide</div>
<div class="t" style="left:364.20px;top:41.00px;font-size:14px;color:#2b2b2b;letter-spacing:0.613px;">Arrange</div>
<div class="t" style="left:435.50px;top:41.00px;font-size:14px;color:#2b2b2b;letter-spacing:0.354px;">Tools</div>
<div class="t" style="left:486.20px;top:41.00px;font-size:14px;color:#2b2b2b;letter-spacing:0.469px;">Extensions</div>
<div class="t" style="left:575.70px;top:41.00px;font-size:14px;color:#2b2b2b;letter-spacing:0.564px;">Help</div>
<div class="t" style="left:1214.30px;top:27.04px;font-size:14.6px;color:#444746;letter-spacing:0.602px;-webkit-text-stroke:0.3px #444746;">Slideshow</div>
<div class="t" style="left:1394.60px;top:27.04px;font-size:14.6px;color:#001d35;letter-spacing:0.343px;-webkit-text-stroke:0.35px #001d35;">Share</div>
<div class="t" style="left:604.20px;top:81.93px;font-size:14.5px;color:#444746;letter-spacing:0.082px;">Plus J...</div>
<div class="t" style="left:741.20px;top:81.93px;font-size:14.5px;color:#444746;letter-spacing:-0.6px;">14</div>
<div class="t" style="left:1235.40px;top:75.76px;font-size:13.4px;color:#ffffff;font-weight:700;letter-spacing:-0.342px;">Instant: AI Slide Generator</div>
<div class="t" style="left:1242.30px;top:190.32px;font-size:17.1px;color:#7d7d7d;letter-spacing:0.375px;word-spacing:-1.2px;">I want to create a</div>
<div class="t" style="left:1386.40px;top:190.32px;font-size:17.1px;color:#a0a0a0;letter-spacing:-1px;">15</div>
<div class="t" style="left:1430.20px;top:190.32px;font-size:17.1px;color:#7d7d7d;letter-spacing:0.712px;">-slide</div>
<div class="t" style="left:1246.60px;top:229.92px;font-size:17.1px;color:#a0a0a0;letter-spacing:0.846px;word-spacing:-1.2px;">investor pitch</div>
<div class="t" style="left:1379.00px;top:229.92px;font-size:17.1px;color:#7d7d7d;letter-spacing:0.735px;">presentation:</div>
<div class="t" style="left:1256.40px;top:279.72px;font-size:16.4px;color:#495057;letter-spacing:1.022px;-webkit-text-stroke:0.3px #495057;word-spacing:-1.2px;">AI presentation tool to create</div>
<div class="t" style="left:1256.40px;top:304.12px;font-size:16.4px;color:#495057;letter-spacing:1.080px;-webkit-text-stroke:0.3px #495057;word-spacing:-1.2px;">fully-editable slides directly in</div>
<div class="t" style="left:1256.40px;top:328.12px;font-size:16.4px;color:#495057;letter-spacing:0.970px;-webkit-text-stroke:0.3px #495057;word-spacing:-1.2px;">Google Slides</div>
<div class="t" style="left:1287.00px;top:387.34px;font-size:14.6px;color:#7f7f7f;letter-spacing:0.803px;-webkit-text-stroke:0.4px #7f7f7f;word-spacing:-1.2px;">Edit the presentation outline</div>
<div class="t" style="left:1264.80px;top:408.84px;font-size:14.6px;color:#8c8c8c;letter-spacing:0.534px;word-spacing:-1.2px;">on the first slide, then click &quot;Next&quot;</div>
<div class="t" style="left:1280.50px;top:489.32px;font-size:16.4px;color:#fff3d0;letter-spacing:0.951px;">Next</div>
<div class="t" style="left:1372.60px;top:489.32px;font-size:16.4px;color:#ffffff;letter-spacing:0.637px;">Restart</div>
<div class="t" style="left:263.80px;top:783.55px;font-size:15px;color:#2b2b2b;letter-spacing:0.209px;">Click to add speaker notes</div>
<div class="t" style="left:24.20px;top:136.07px;font-size:13.5px;color:#444746;">1</div>
<div class="t" style="left:23.80px;top:243.87px;font-size:13.5px;color:#444746;">2</div>
<div class="t" style="left:95.20px;top:275.51px;font-size:11.8px;color:#222;font-weight:700;letter-spacing:-0.384px;">Pitch Deck</div>
<div class="t" style="left:81.10px;top:292.51px;font-size:4.6px;color:#9a9a9a;letter-spacing:0.195px;">Stunning presentations created with AI</div>
<div class="t" style="left:118.30px;top:265.80px;font-size:5.2px;color:#e0a020;letter-spacing:0.260px;">instant</div>
<div class="abs" style="left:0;top:829px;width:1222px;height:9px;background:linear-gradient(#f9fafb,#fff)"></div>
<div class="abs" style="left:0;top:838px;width:1536px;height:26px;background:#fff"></div>
</body></html>
